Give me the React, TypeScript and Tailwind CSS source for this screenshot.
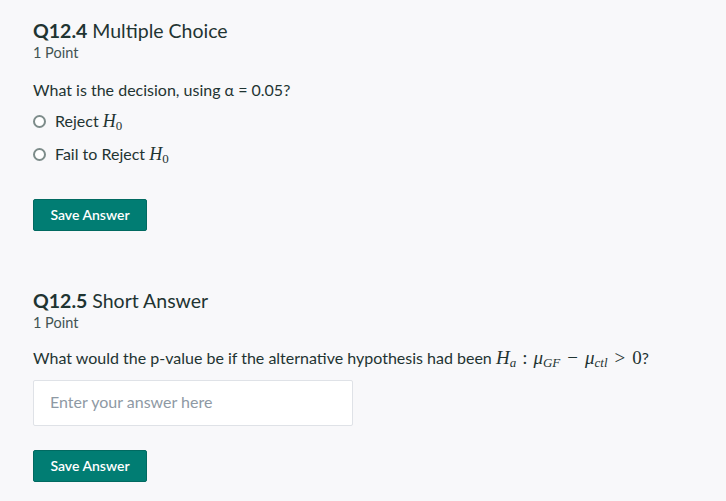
import React from "react";

const font = { fontFamily: "Lato, 'Open Sans', sans-serif" };
const serif = { fontFamily: "'Liberation Serif', 'DejaVu Serif', serif" };

function H0() {
  return (
    <span className="text-[18px]" style={serif}>
      <span className="italic">H</span>
      <span className="text-[13px] relative top-[3px]">0</span>
    </span>
  );
}

function Radio({ children }: { children: React.ReactNode }) {
  return (
    <label className="flex items-center h-[33px] gap-[9px]">
      <span className="w-[13px] h-[13px] rounded-full border-2 border-[#7d8c8a] bg-white" />
      <span className="text-[16px]">{children}</span>
    </label>
  );
}

function SaveButton() {
  return (
    <button className="w-[114px] h-[32px] bg-[#017d73] border border-[#016a61] rounded-[2px] text-white text-[14px] font-semibold flex items-center justify-center">
      <span className="relative top-[-1px]">Save Answer</span>
    </button>
  );
}

export default function App() {
  return (
    <div className="min-h-[501px] w-[726px] bg-[#f8f8fa] text-[#1f3432] pl-[33px] pt-[19px]" style={font}>
      <div className="text-[19.5px] leading-[24px]">
        <span className="font-bold">Q12.4</span> Multiple Choice
      </div>
      <div className="text-[14.5px] leading-[20px] text-[#435453]">1 Point</div>
      <div className="text-[16px] leading-[20px] mt-[17px]">What is the decision, using α = 0.05?</div>
      <div className="mt-[5px] flex flex-col">
        <Radio>
          Reject <H0 />
        </Radio>
        <Radio>
          Fail to Reject <H0 />
        </Radio>
      </div>
      <div className="mt-[28px]">
        <SaveButton />
      </div>

      <div className="text-[19.5px] leading-[24px] mt-[58px]">
        <span className="font-bold">Q12.5</span> Short Answer
      </div>
      <div className="text-[14.5px] leading-[20px] text-[#435453]">1 Point</div>
      <div className="text-[16px] leading-[20px] mt-[15px] flex items-baseline">
        <span>What would the p-value be if the alternative hypothesis had been&nbsp;</span>
        <span className="text-[19px] whitespace-nowrap" style={serif}>
          <span className="italic">H</span>
          <span className="italic text-[13px] relative top-[3px]">a</span>
          <span className="mx-[6px]">:</span>
          <span className="italic">μ</span>
          <span className="italic text-[13px] relative top-[3px]">GF</span>
          <span className="mx-[7px]">−</span>
          <span className="italic">μ</span>
          <span className="italic text-[13px] relative top-[3px]">ctl</span>
          <span className="mx-[7px]">&gt;</span>
          <span>0</span>
        </span>
        <span>?</span>
      </div>
      <div className="mt-[10px] w-[320px] h-[46px] bg-white border border-[#dfe2e7] rounded-[2px] flex items-center px-[16px]">
        <span className="text-[16px] text-[#8e99a4] relative top-[-1px]">Enter your answer here</span>
      </div>
      <div className="mt-[24px]">
        <SaveButton />
      </div>
    </div>
  );
}
